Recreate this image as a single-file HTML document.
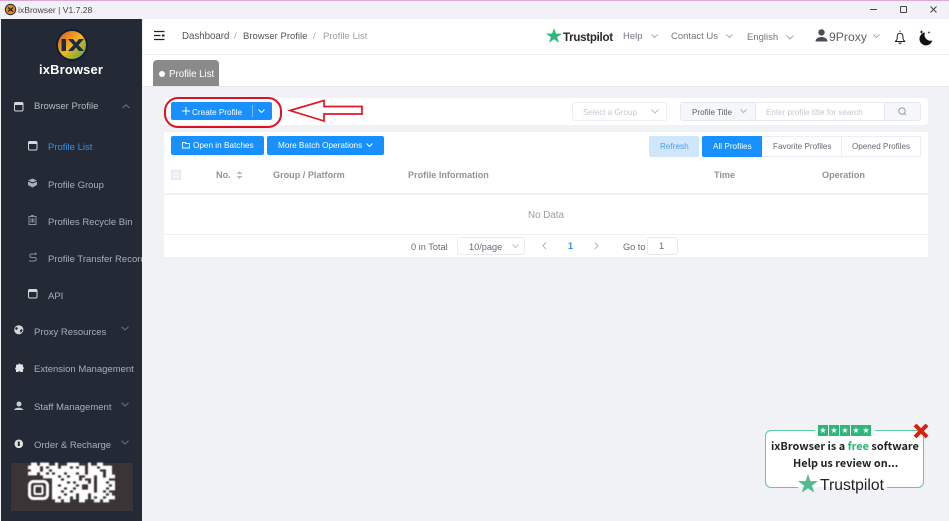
<!DOCTYPE html>
<html><head><meta charset="utf-8"><style>
html,body{margin:0;padding:0}
body{width:949px;height:521px;overflow:hidden;position:relative;background:#f0f2f5;font-family:"Liberation Sans",sans-serif}
.a{position:absolute}
.t{position:absolute;white-space:nowrap;line-height:14px;font-size:9.500px}
svg{position:absolute;overflow:visible}
.s{color:#a9afb8;font-size:9.500px}
.b{position:absolute;background:#1890ff;border-radius:2px}
.w{color:#fff;font-size:8.200px}
.h{color:#8f949c;font-size:9.100px;font-weight:bold}
.n{color:#666b73;font-size:9.500px}
.st{position:absolute;top:425px;width:10px;height:11px;background:#2fb67a;color:#fff;font:8px/11px "DejaVu Sans",sans-serif;text-align:center}
.p{font-family:"Noto Sans CJK JP",sans-serif;font-size:10.900px;font-weight:bold;color:#222}
</style></head><body>
<!-- title bar -->
<div class="a" style="left:0;top:0;width:949px;height:19px;background:#f3f1f8"></div>
<div class="a" style="left:0;top:0;width:949px;height:1px;background:#d9a9d6"></div>
<svg style="left:5px;top:4px" width="11" height="11" viewBox="0 0 11 11"><circle cx="5.500" cy="5.500" r="5.200" fill="#e08a1c" stroke="#1f2a3a"/><path d="M3 3.500 8 7.500M8 3.500 3 7.500" stroke="#1f2a3a" stroke-width="1.400"/></svg>
<div class="t" style="left:18px;top:3px;font-size:8.600px;color:#444">ixBrowser | V1.7.28</div>
<div class="a" style="left:870px;top:9px;width:7px;height:1px;background:#444"></div>
<div class="a" style="left:900px;top:6px;width:5px;height:5px;border:1px solid #444;border-radius:1px"></div>
<svg style="left:930px;top:6px" width="8" height="8"><path d="M.5.5l6 6M6.500.5l-6 6" stroke="#444" fill="none"/></svg>
<!-- sidebar -->
<div class="a" style="left:1px;top:19px;width:141px;height:502px;background:#232a36"></div>
<svg style="left:56px;top:29px" width="32" height="32" viewBox="0 0 32 32"><defs><linearGradient id="g" x1="0" y1="0" x2="1" y2="1"><stop offset="0" stop-color="#e0482c"/><stop offset=".5" stop-color="#f2b61e"/><stop offset="1" stop-color="#3fa84c"/></linearGradient></defs><circle cx="16" cy="16" r="15" fill="url(#g)" stroke="#101f36" stroke-width="2"/><path d="M5.500 10H10v12H5.500zM12 10h5l3 3.500L23 10h5l-5.500 6 5.500 6h-5l-3-3.500-3 3.500h-5l5.500-6z" fill="#1c2a48"/></svg>
<div class="t" style="left:39px;top:63px;font-size:12.900px;font-weight:bold;color:#fff;letter-spacing:.2px">ixBrowser</div>
<svg style="left:14px;top:102px" width="10" height="10"><rect x=".5" y=".5" width="8.500" height="8.500" rx="1.200" fill="none" stroke="#d5d7da"/><rect x=".5" y=".5" width="8.500" height="2.500" fill="#d5d7da"/></svg>
<div class="t s" style="left:34px;top:100px;color:#b6bbc2">Browser Profile</div>
<svg style="left:122px;top:104px" width="8" height="5"><path d="M.5 4 4 .8 7.500 4" stroke="#6f7580" fill="none"/></svg>
<svg style="left:28px;top:141px" width="10" height="10"><rect x=".5" y=".5" width="8.500" height="8.500" rx="1.200" fill="none" stroke="#d5d7da"/><rect x=".5" y=".5" width="8.500" height="2.500" fill="#d5d7da"/></svg>
<div class="t" style="left:48px;top:140.500px;color:#3a8fe0">Profile List</div>
<svg style="left:28px;top:178px" width="10" height="10"><path d="M4.500.5 9 2.500v4.500L4.500 9.500 0 7V2.500z" fill="#a9afb8"/><path d="M0 3l4.500 2 4.500-2" stroke="#232a36" fill="none"/></svg>
<div class="t s" style="left:48px;top:178.500px">Profile Group</div>
<svg style="left:28px;top:215px" width="10" height="10"><rect x="1" y="1.500" width="7" height="8" fill="none" stroke="#8b9099"/><path d="M3 .5h3M3 3.500v4M4.500 3.500v4M6 3.500v4" stroke="#8b9099"/></svg>
<div class="t s" style="left:48px;top:215.500px">Profiles Recycle Bin</div>
<svg style="left:28px;top:252px" width="10" height="11"><path d="M8 2H3.500a1.500 1.500 0 0 0 0 3.500h3a1.700 1.700 0 0 1 0 3.500H1" stroke="#8b9099" fill="none"/><path d="M7 0l2 2-2 1" fill="#8b9099"/></svg>
<div class="t s" style="left:48px;top:252.500px;width:94px;overflow:hidden">Profile Transfer Records</div>
<svg style="left:28px;top:289px" width="10" height="10"><rect x=".5" y=".5" width="8.500" height="8.500" rx="1.200" fill="none" stroke="#d5d7da"/><rect x=".5" y=".5" width="8.500" height="2.500" fill="#d5d7da"/></svg>
<div class="t s" style="left:48px;top:289.500px">API</div>
<svg style="left:14px;top:325px" width="10" height="10"><circle cx="4.800" cy="4.800" r="4.600" fill="#d5d7da"/><path d="M2 2l2 1-1 2-2-1zM6 5l2-1 .5 2-2 2z" fill="#232a36"/></svg>
<div class="t s" style="left:34px;top:325.500px">Proxy Resources</div>
<svg style="left:121px;top:326px" width="8" height="5"><path d="M.5.8 4 4 7.500.8" stroke="#6f7580" fill="none"/></svg>
<svg style="left:14px;top:363px" width="10" height="10"><path d="M3 1.500h1.500a1 1 0 0 1 2 0H9v2.500a1.200 1.200 0 0 1 0 2.300V9H6.500a1.200 1.200 0 0 0-2.300 0H2V6.700a1.200 1.200 0 0 1 0-2.300V2z" fill="#e2e3e5"/></svg>
<div class="t s" style="left:34px;top:363px">Extension Management</div>
<svg style="left:14px;top:401px" width="10" height="10"><circle cx="5" cy="3" r="2.500" fill="#c9ccd1"/><path d="M0 9c1-3 8-3 9.500 0z" fill="#c9ccd1"/></svg>
<div class="t s" style="left:34px;top:401px">Staff Management</div>
<svg style="left:121px;top:402px" width="8" height="5"><path d="M.5.8 4 4 7.500.8" stroke="#6f7580" fill="none"/></svg>
<svg style="left:14px;top:439px" width="10" height="10"><circle cx="4.800" cy="4.800" r="4.300" fill="#e2e3e5"/><rect x="3.800" y="2.500" width="2" height="4.500" fill="#232a36"/></svg>
<div class="t s" style="left:34px;top:438.500px">Order &amp; Recharge</div>
<svg style="left:121px;top:440px" width="8" height="5"><path d="M.5.8 4 4 7.500.8" stroke="#6f7580" fill="none"/></svg>
<!-- QR -->
<div class="a" style="left:11px;top:463px;width:122px;height:48px;background:#3a3436"></div>
<svg style="left:28px;top:463px;filter:blur(.4px)" width="88" height="39" viewBox="0 0 88 39">
<path fill="none" stroke="#fff" stroke-width="3.700" d="M3 1.500h6M12 1.500h9M27 1.500h3M39 1.500h12M60 1.500h3M69 1.500h6M0 4.500h12M15 4.500h3M21 4.500h9M33 4.500h9M45 4.500h3M51 4.500h6M60 4.500h9M72 4.500h12M3 7.500h9M15 7.500h6M24 7.500h33M60 7.500h12M78 7.500h6M0 10.500h9M12 10.500h6M21 10.500h3M27 10.500h9M39 10.500h9M51 10.500h6M60 10.500h15M78 10.500h6M15 13.500h15M33 13.500h6M42 13.500h9M57 13.500h9M69 13.500h6M78 13.500h9M24 16.500h9M36 16.500h15M54 16.500h3M63 16.500h3M69 16.500h12M24 19.500h15M42 19.500h3M48 19.500h12M63 19.500h3M69 19.500h9M81 19.500h6M24 22.500h6M33 22.500h15M51 22.500h3M60 22.500h6M69 22.500h12M84 22.500h3M24 25.500h12M39 25.500h6M48 25.500h6M60 25.500h6M69 25.500h9M81 25.500h6M24 28.500h9M36 28.500h6M45 28.500h21M69 28.500h6M78 28.500h3M24 31.500h12M39 31.500h9M51 31.500h9M63 31.500h15M81 31.500h3M24 34.500h6M33 34.500h9M45 34.500h3M51 34.500h9M63 34.500h3M69 34.500h6M78 34.500h9M27 37.500h6M36 37.500h6M51 37.500h6M66 37.500h6M75 37.500h6"/>
<rect x="1.500" y="18.500" width="18" height="17" rx="4" fill="none" stroke="#fff" stroke-width="3"/>
<rect x="6.500" y="23" width="8" height="8" rx="1" fill="none" stroke="#fff" stroke-width="2"/>
</svg>
<!-- header -->
<div class="a" style="left:143px;top:19px;width:806px;height:35px;background:#fff"></div>
<div class="a" style="left:143px;top:54px;width:806px;height:33px;background:#fff;border-top:1px solid #f0f0f2;box-sizing:border-box;border-bottom:1px solid #e6e8eb"></div>
<svg style="left:154px;top:31px" width="11" height="10"><path d="M0 .5h10.500M0 4.500h6.500M0 8.500h10.500" stroke="#222" stroke-width="1.200" fill="none"/><path d="M8 3.500h2.500v2H8z" fill="#222"/></svg>
<div class="t" style="left:182px;top:30px;color:#555;font-size:9.700px">Dashboard</div>
<div class="t" style="left:234px;top:30px;color:#aaa">/</div>
<div class="t" style="left:243px;top:30px;color:#555">Browser Profile</div>
<div class="t" style="left:313px;top:30px;color:#aaa">/</div>
<div class="t" style="left:323px;top:30px;color:#9a9da3">Profile List</div>
<svg style="left:546px;top:28px" width="16" height="15" viewBox="0 0 16 15"><path d="M8 0l1.900 5.600H16l-4.900 3.500 1.900 5.700L8 11.300 3 14.800l1.900-5.700L0 5.600h6.100z" fill="#2fb67a"/></svg>
<div class="t" style="left:563px;top:31px;font-size:11.600px;font-weight:bold;color:#2a2a2a;letter-spacing:-.3px">Trustpilot</div>
<div class="t n" style="left:623px;top:30px;color:#72767d">Help</div>
<svg style="left:651px;top:34px" width="7" height="5"><path d="M.5.5 3.500 3.500 6.500.5" stroke="#a8abb1" fill="none"/></svg>
<div class="t n" style="left:671px;top:30px;color:#72767d">Contact Us</div>
<svg style="left:726px;top:34px" width="7" height="5"><path d="M.5.5 3.500 3.500 6.500.5" stroke="#a8abb1" fill="none"/></svg>
<div class="t n" style="left:747px;top:31px;color:#72767d">English</div>
<svg style="left:786px;top:35px" width="8" height="5"><path d="M.5.5 4 4 7.500.5" stroke="#a8abb1" fill="none"/></svg>
<svg style="left:815px;top:29px" width="13" height="13"><circle cx="6.500" cy="3.400" r="3.200" fill="#4a4d52"/><path d="M.5 12.500c0-6 12-6 12 0z" fill="#4a4d52"/></svg>
<div class="t" style="left:829px;top:30px;font-size:12.200px;color:#5c6067">9Proxy</div>
<svg style="left:873px;top:34px" width="7" height="5"><path d="M.5.5 3.500 3.500 6.500.5" stroke="#a8abb1" fill="none"/></svg>
<svg style="left:894px;top:30px" width="13" height="15"><path d="M6 .5v1.300M2.300 10.500c1.200-1.500 1-3 1-4.500a2.800 2.800 0 0 1 5.600 0c0 1.500-.2 3 1 4.500 .6.700 1.200 1 1.200 1H1.100s.6-.3 1.200-1zM4.800 12.500a1.300 1.300 0 0 0 2.500 0" stroke="#222" fill="none"/></svg>
<svg style="left:919px;top:29px" width="14" height="16"><path d="M6 3.500a6.500 6.500 0 1 0 7.300 8A6 6 0 0 1 6 3.500z" fill="#111"/><path d="M2.500 1l.6 1.500 1.500.5-1.500.5-.6 1.500-.6-1.500L.5 3l1.400-.5zM10 2l.4 1 1 .4-1 .4-.4 1-.4-1-1-.4 1-.4z" fill="#111"/></svg>
<!-- tab -->
<div class="a" style="left:153px;top:60px;width:66px;height:26px;background:#8a8a8a;border-radius:4px 4px 0 0"></div>
<div class="a" style="left:159px;top:71px;width:6px;height:6px;border-radius:50%;background:#fff"></div>
<div class="t" style="left:169px;top:67.500px;color:#fff;font-size:9.700px">Profile List</div>
<!-- toolbar -->
<div class="a" style="left:164px;top:98px;width:764px;height:27px;background:#fff;border-radius:3px"></div>
<div class="b" style="left:171px;top:102px;width:101px;height:18px"></div>
<svg style="left:182px;top:107px" width="8" height="8"><path d="M4 0v8M0 4h8" stroke="#fff" fill="none"/></svg>
<div class="t w" style="left:192px;top:105.500px">Create Profile</div>
<div class="a" style="left:252px;top:105px;width:1px;height:12px;background:#7cc0ff"></div>
<svg style="left:258px;top:109px" width="7" height="5"><path d="M.5.5 3.500 3.500 6.500.5" stroke="#fff" fill="none"/></svg>
<div class="a" style="left:164px;top:96.500px;width:118px;height:31px;box-sizing:border-box;border:2px solid #e01020;border-radius:14px"></div>
<svg style="left:288px;top:98px" width="76" height="26" viewBox="0 0 76 26"><path d="M2 12.500 36 2.500v6H74V16H36v7z" fill="none" stroke="#e01824" stroke-width="1.700"/></svg>
<div class="a" style="left:572px;top:102px;width:95px;height:19px;box-sizing:border-box;border:1px solid #ebedf0;border-radius:3px;background:#fff"></div>
<div class="t" style="left:583px;top:105.500px;color:#c5c8cd;font-size:8.100px">Select a Group</div>
<svg style="left:651px;top:109px" width="8" height="5"><path d="M.5.5 4 4 7.500.5" stroke="#b8bbc0" fill="none"/></svg>
<div class="a" style="left:680px;top:102px;width:241px;height:19px;box-sizing:border-box;border:1px solid #e6e8eb;border-radius:3px;background:#fff"></div>
<div class="a" style="left:681px;top:103px;width:75px;height:17px;background:#f5f7fa;border-right:1px solid #e6e8eb;box-sizing:border-box"></div>
<div class="a" style="left:884px;top:103px;width:36px;height:17px;background:#f5f7fa;border-left:1px solid #e6e8eb;box-sizing:border-box"></div>
<div class="t" style="left:692px;top:105.500px;color:#5f636a;font-size:8.100px">Profile Title</div>
<svg style="left:740px;top:109px" width="7" height="5"><path d="M.5.5 3.500 3.500 6.500.5" stroke="#b0b3b8" fill="none"/></svg>
<div class="t" style="left:766px;top:105.500px;color:#c5c8cd;font-size:8.100px">Enter profile title for search</div>
<svg style="left:898px;top:107px" width="9" height="9"><circle cx="4" cy="4" r="3.200" stroke="#9a9da3" fill="none"/><path d="M6.500 6.500 8 8" stroke="#9a9da3"/></svg>
<!-- table card -->
<div class="a" style="left:164px;top:132px;width:764px;height:125px;background:#fff"></div>
<div class="b" style="left:171px;top:136px;width:93px;height:19px"></div>
<svg style="left:182px;top:141px" width="8" height="8"><path d="M.5 1.500h2.500l1 1h3.500v4.500h-7z" stroke="#fff" fill="none"/></svg>
<div class="t w" style="left:193px;top:139px">Open in Batches</div>
<div class="b" style="left:267px;top:136px;width:117px;height:19px"></div>
<div class="t w" style="left:278px;top:139px">More Batch Operations</div>
<svg style="left:366px;top:143px" width="7" height="5"><path d="M.5.5 3.500 3.500 6.500.5" stroke="#fff" fill="none"/></svg>
<div class="a" style="left:649px;top:136px;width:50px;height:21px;background:#cfe6fc;border-radius:2px"></div>
<div class="t" style="left:660px;top:140px;color:#4e9ff0;font-size:8.200px">Refresh</div>
<div class="a" style="left:702px;top:136px;width:219px;height:21px;box-sizing:border-box;border:1px solid #eceef1;border-radius:2px;background:#fff"></div>
<div class="a" style="left:702px;top:136px;width:60px;height:21px;background:#1890ff;border-radius:2px 0 0 2px"></div>
<div class="a" style="left:841px;top:136px;width:1px;height:21px;background:#eceef1"></div>
<div class="t" style="left:713px;top:140px;color:#fff;font-size:8.200px">All Profiles</div>
<div class="t" style="left:773px;top:140px;color:#666b73;font-size:8.100px">Favorite Profiles</div>
<div class="t" style="left:852px;top:140px;color:#666b73;font-size:8.100px">Opened Profiles</div>
<!-- table head -->
<div class="a" style="left:171px;top:170px;width:10px;height:10px;background:#eff2f8;border:.5px solid #dfe4ee;box-sizing:border-box;border-radius:1px"></div>
<div class="t h" style="left:216px;top:168px">No.</div>
<svg style="left:236px;top:171px" width="7" height="8"><path d="M3.500 0 6.500 3H.5zM3.500 8 .5 5h6z" fill="#b8bbc0"/></svg>
<div class="t h" style="left:273px;top:168px">Group / Platform</div>
<div class="t h" style="left:408px;top:168px">Profile Information</div>
<div class="t h" style="left:714px;top:168px">Time</div>
<div class="t h" style="left:822px;top:168px">Operation</div>
<div class="a" style="left:164px;top:193px;width:764px;height:2px;background:#f0f3f6"></div>
<div class="t" style="left:528px;top:209px;color:#9a9da3;font-size:9.800px">No Data</div>
<div class="a" style="left:164px;top:234px;width:764px;height:1px;background:#eef0f3"></div>
<div class="t n" style="left:411px;top:239.500px;font-size:9.200px">0 in Total</div>
<div class="a" style="left:457px;top:237px;width:68px;height:18px;box-sizing:border-box;border:1px solid #e8eaed;border-radius:3px"></div>
<div class="t n" style="left:469px;top:239.500px;font-size:9.200px">10/page</div>
<svg style="left:512px;top:244px" width="7" height="5"><path d="M.5.5 3.500 3.500 6.500.5" stroke="#c0c3c8" fill="none"/></svg>
<svg style="left:542px;top:242px" width="5" height="8"><path d="M4 .5.800 3.800 4 7" stroke="#b0b3b8" fill="none"/></svg>
<div class="t" style="left:568px;top:239px;color:#2f8ff0;font-size:9.200px;font-weight:bold">1</div>
<svg style="left:594px;top:242px" width="5" height="8"><path d="M.8.5 4 3.800.8 7" stroke="#b0b3b8" fill="none"/></svg>
<div class="t n" style="left:623px;top:239.500px;font-size:9.200px">Go to</div>
<div class="a" style="left:647px;top:237px;width:31px;height:18px;box-sizing:border-box;border:1px solid #e8eaed;border-radius:3px;background:#fff"></div>
<div class="t n" style="left:659px;top:238.500px;font-size:9.200px">1</div>
<!-- trustpilot promo -->
<div class="a" style="left:765px;top:430px;width:159px;height:58px;box-sizing:border-box;border:1px solid #5fcba0;border-radius:6px;background:#fff"></div>
<div class="a" style="left:815px;top:424px;width:60px;height:12px;background:#f0f2f5"></div>
<div class="st" style="left:818px">★</div><div class="st" style="left:829px">★</div><div class="st" style="left:840px">★</div><div class="st" style="left:851px">★</div><div class="st" style="left:861px">★</div>
<div class="t p" style="left:771px;top:439px">ixBrowser is a <span style="color:#22b573">free</span> software</div>
<div class="t p" style="left:793px;top:456px">Help us review on...</div>
<div class="a" style="left:798px;top:470px;width:89px;height:17.500px;background:#fff"></div>
<div class="a" style="left:798px;top:487px;width:89px;height:2px;background:#f0f2f5"></div>
<svg style="left:798px;top:474px" width="20" height="19" viewBox="0 0 16 15"><path d="M8 0l1.900 5.600H16l-4.900 3.500 1.900 5.700L8 11.300 3 14.800l1.900-5.700L0 5.600h6.100z" fill="#52b98c"/></svg>
<div class="t" style="left:820px;top:477px;font-size:15.700px;line-height:17px;color:#222">Trustpilot</div>
<svg style="left:913px;top:423px" width="16" height="16"><path d="M2 2 14 14M14 2 2 14" stroke="#d8200e" stroke-width="4" fill="none"/></svg>
</body></html>
